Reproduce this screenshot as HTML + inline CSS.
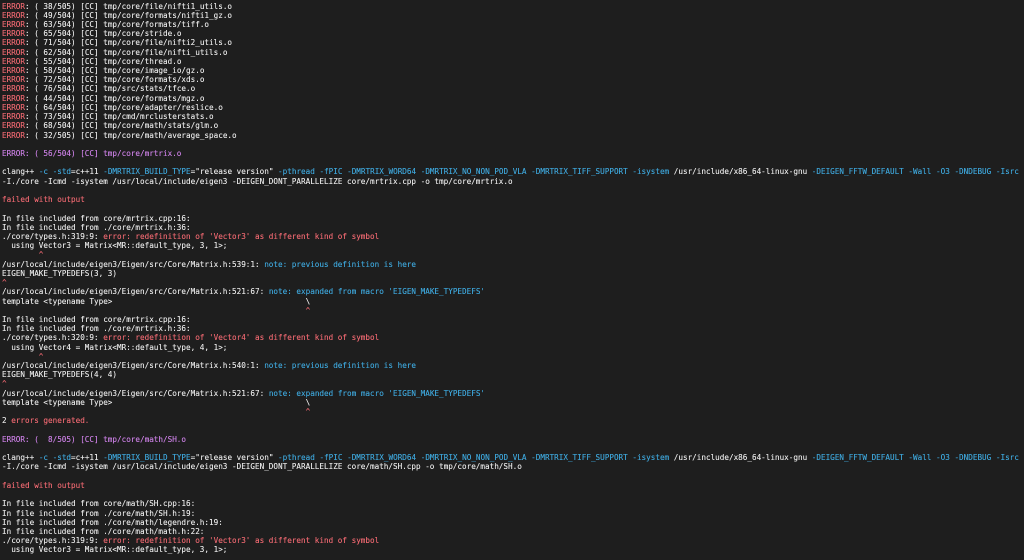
<!DOCTYPE html>
<html><head><meta charset="utf-8"><style>
html,body{margin:0;padding:0;background:#1e1e1e;width:1024px;height:560px;overflow:hidden}
pre{margin:0;padding:1.5px 0 0 2px;font-family:"DejaVu Sans Mono","Liberation Mono",monospace;font-size:7.65px;line-height:9.22px;color:#e4e4e4;white-space:pre;text-shadow:0 0 0.3px currentColor}
.r{color:#e8666e}.b{color:#3da3d6}.p{color:#c67ddf}
</style></head><body><pre><span class="r">ERROR</span>: ( 38/505) [CC] tmp/core/file/nifti1_utils.o
<span class="r">ERROR</span>: ( 49/504) [CC] tmp/core/formats/nifti1_gz.o
<span class="r">ERROR</span>: ( 63/504) [CC] tmp/core/formats/tiff.o
<span class="r">ERROR</span>: ( 65/504) [CC] tmp/core/stride.o
<span class="r">ERROR</span>: ( 71/504) [CC] tmp/core/file/nifti2_utils.o
<span class="r">ERROR</span>: ( 62/504) [CC] tmp/core/file/nifti_utils.o
<span class="r">ERROR</span>: ( 55/504) [CC] tmp/core/thread.o
<span class="r">ERROR</span>: ( 58/504) [CC] tmp/core/image_io/gz.o
<span class="r">ERROR</span>: ( 72/504) [CC] tmp/core/formats/xds.o
<span class="r">ERROR</span>: ( 76/504) [CC] tmp/src/stats/tfce.o
<span class="r">ERROR</span>: ( 44/504) [CC] tmp/core/formats/mgz.o
<span class="r">ERROR</span>: ( 64/504) [CC] tmp/core/adapter/reslice.o
<span class="r">ERROR</span>: ( 73/504) [CC] tmp/cmd/mrclusterstats.o
<span class="r">ERROR</span>: ( 68/504) [CC] tmp/core/math/stats/glm.o
<span class="r">ERROR</span>: ( 32/505) [CC] tmp/core/math/average_space.o

<span class="p">ERROR: ( 56/504) [CC] tmp/core/mrtrix.o</span>

clang++ <span class="b">-c</span> <span class="b">-std</span>=c++11 <span class="b">-DMRTRIX_BUILD_TYPE</span>="release version" <span class="b">-pthread</span> <span class="b">-fPIC</span> <span class="b">-DMRTRIX_WORD64</span> <span class="b">-DMRTRIX_NO_NON_POD_VLA</span> <span class="b">-DMRTRIX_TIFF_SUPPORT</span> <span class="b">-isystem</span> /usr/include/x86_64-linux-gnu <span class="b">-DEIGEN_FFTW_DEFAULT</span> <span class="b">-Wall</span> <span class="b">-O3</span> <span class="b">-DNDEBUG</span> <span class="b">-Isrc</span>
-I./core -Icmd -isystem /usr/local/include/eigen3 -DEIGEN_DONT_PARALLELIZE core/mrtrix.cpp -o tmp/core/mrtrix.o

<span class="r">failed with output</span>

In file included from core/mrtrix.cpp:16:
In file included from ./core/mrtrix.h:36:
./core/types.h:319:9: <span class="r">error: redefinition of 'Vector3' as different kind of symbol</span>
  using Vector3 = Matrix&lt;MR::default_type, 3, 1&gt;;
<span class="r">        ^</span>
/usr/local/include/eigen3/Eigen/src/Core/Matrix.h:539:1: <span class="b">note: previous definition is here</span>
EIGEN_MAKE_TYPEDEFS(3, 3)
<span class="r">^</span>
/usr/local/include/eigen3/Eigen/src/Core/Matrix.h:521:67: <span class="b">note: expanded from macro 'EIGEN_MAKE_TYPEDEFS'</span>
template &lt;typename Type&gt;                                          \
<span class="r">                                                                  ^</span>
In file included from core/mrtrix.cpp:16:
In file included from ./core/mrtrix.h:36:
./core/types.h:320:9: <span class="r">error: redefinition of 'Vector4' as different kind of symbol</span>
  using Vector4 = Matrix&lt;MR::default_type, 4, 1&gt;;
<span class="r">        ^</span>
/usr/local/include/eigen3/Eigen/src/Core/Matrix.h:540:1: <span class="b">note: previous definition is here</span>
EIGEN_MAKE_TYPEDEFS(4, 4)
<span class="r">^</span>
/usr/local/include/eigen3/Eigen/src/Core/Matrix.h:521:67: <span class="b">note: expanded from macro 'EIGEN_MAKE_TYPEDEFS'</span>
template &lt;typename Type&gt;                                          \
<span class="r">                                                                  ^</span>
2 <span class="r">errors generated.</span>

<span class="p">ERROR: (  8/505) [CC] tmp/core/math/SH.o</span>

clang++ <span class="b">-c</span> <span class="b">-std</span>=c++11 <span class="b">-DMRTRIX_BUILD_TYPE</span>="release version" <span class="b">-pthread</span> <span class="b">-fPIC</span> <span class="b">-DMRTRIX_WORD64</span> <span class="b">-DMRTRIX_NO_NON_POD_VLA</span> <span class="b">-DMRTRIX_TIFF_SUPPORT</span> <span class="b">-isystem</span> /usr/include/x86_64-linux-gnu <span class="b">-DEIGEN_FFTW_DEFAULT</span> <span class="b">-Wall</span> <span class="b">-O3</span> <span class="b">-DNDEBUG</span> <span class="b">-Isrc</span>
-I./core -Icmd -isystem /usr/local/include/eigen3 -DEIGEN_DONT_PARALLELIZE core/math/SH.cpp -o tmp/core/math/SH.o

<span class="r">failed with output</span>

In file included from core/math/SH.cpp:16:
In file included from ./core/math/SH.h:19:
In file included from ./core/math/legendre.h:19:
In file included from ./core/math/math.h:22:
./core/types.h:319:9: <span class="r">error: redefinition of 'Vector3' as different kind of symbol</span>
  using Vector3 = Matrix&lt;MR::default_type, 3, 1&gt;;
</pre></body></html>
